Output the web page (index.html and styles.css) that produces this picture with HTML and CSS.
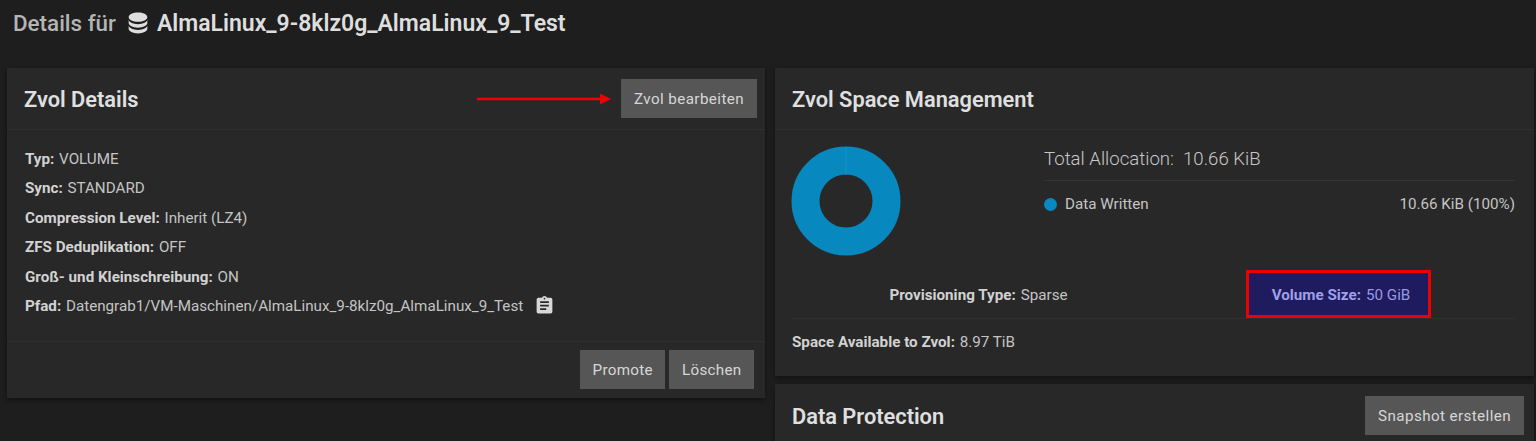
FILE: index.html
```html
<!DOCTYPE html>
<html lang="en">
<head>
    <meta charset="UTF-8">
    <title>Details für AlmaLinux_9-8klz0g_AlmaLinux_9_Test</title>
    <link rel="stylesheet" href="styles.css">
</head>
<body>
    <h1 class="page-title">
        <span class="page-title-label">Details für</span>
        <svg class="page-title-icon" viewBox="0 0 24 24"><path d="M12,3C7.58,3 4,4.79 4,7C4,9.21 7.58,11 12,11C16.42,11 20,9.21 20,7C20,4.79 16.42,3 12,3M4,9V12C4,14.21 7.58,16 12,16C16.42,16 20,14.21 20,12V9C20,11.21 16.42,13 12,13C7.58,13 4,11.21 4,9M4,14V17C4,19.21 7.58,21 12,21C16.42,21 20,19.21 20,17V14C20,16.21 16.42,18 12,18C7.58,18 4,16.21 4,14Z"/></svg>
        <span class="page-title-name">AlmaLinux_9-8klz0g_AlmaLinux_9_Test</span>
    </h1>

    <div class="columns">
        <section class="card">
            <header class="card-header">
                <h2>Zvol Details</h2>
                <svg class="arrow" viewBox="0 0 134 12"><path d="M0 6H124" stroke="#f00000" stroke-width="2.5"/><path d="M123 0.5L134 6L123 11.5Z" fill="#f00000"/></svg>
                <button class="btn">Zvol bearbeiten</button>
            </header>
            <div class="details">
                <p><b>Typ:</b> VOLUME</p>
                <p><b>Sync:</b> STANDARD</p>
                <p><b>Compression Level:</b> Inherit (LZ4)</p>
                <p><b>ZFS Deduplikation:</b> OFF</p>
                <p><b>Groß- und Kleinschreibung:</b> ON</p>
                <p><b>Pfad:</b> Datengrab1/VM-Maschinen/AlmaLinux_9-8klz0g_AlmaLinux_9_Test
                    <svg class="copy-icon" viewBox="0 0 24 24"><path d="M17,9H7V7H17M17,13H7V11H17M14,17H7V15H14M12,3A1,1 0 0,1 13,4A1,1 0 0,1 12,5A1,1 0 0,1 11,4A1,1 0 0,1 12,3M19,3H14.82C14.4,1.84 13.3,1 12,1C10.7,1 9.6,1.84 9.18,3H5A2,2 0 0,0 3,5V19A2,2 0 0,0 5,21H19A2,2 0 0,0 21,19V5A2,2 0 0,0 19,3Z"/></svg>
                </p>
            </div>
            <footer class="card-footer">
                <button class="btn">Promote</button>
                <button class="btn">Löschen</button>
            </footer>
        </section>

        <div class="stack">
            <section class="card">
                <header class="card-header">
                    <h2>Zvol Space Management</h2>
                </header>
                <div class="space">
                    <div class="space-top">
                        <svg class="donut" viewBox="0 0 110 110"><circle cx="55" cy="55" r="40.5" fill="none" stroke="#0788bf" stroke-width="28"/><path d="M55 1V29" stroke="#1a94c8" stroke-width="1"/></svg>
                        <div class="alloc">
                            <div class="alloc-total">Total Allocation:&nbsp; 10.66 KiB</div>
                            <div class="alloc-row">
                                <span class="dot"></span>
                                <span>Data Written</span>
                                <span class="alloc-value">10.66 KiB (100%)</span>
                            </div>
                        </div>
                    </div>
                    <div class="space-pair">
                        <div class="pair-item"><b>Provisioning Type:</b> Sparse</div>
                        <div class="pair-item pair-highlight"><b>Volume Size:</b> 50 GiB</div>
                    </div>
                    <p class="space-free"><b>Space Available to Zvol:</b> 8.97 TiB</p>
                </div>
            </section>

            <section class="card">
                <header class="card-header card-header-short">
                    <h2>Data Protection</h2>
                    <button class="btn btn-right">Snapshot erstellen</button>
                </header>
            </section>
        </div>
    </div>
</body>
</html>
```

FILE: styles.css
```css
html, body {
    height: 441px;
    overflow: hidden;
}
body {
    margin: 0;
    background: #1e1e1e;
    color: #c4c4c4;
    font-family: Roboto, "Liberation Sans", sans-serif;
    font-size: 15.2px;
}
.page-title {
    display: flex;
    align-items: center;
    height: 46px;
    margin: 0 0 22px;
    padding-left: 13px;
    font-size: 22.4px;
    font-weight: 500;
    color: #dedede;
}
.page-title-label {
    color: #b5b5b5;
}
.page-title-name {
    font-size: 23px;
    font-weight: 600;
}
.page-title-icon {
    width: 28px;
    height: 28px;
    margin: 0 5px 0 8px;
    fill: #dedede;
}
.columns {
    display: grid;
    grid-template-columns: 758px 759px;
    column-gap: 10px;
    align-items: start;
    padding-left: 7px;
}
.stack {
    display: flex;
    flex-direction: column;
    gap: 8px;
}
.card {
    background: #282828;
    box-shadow: 0 2px 5px rgba(0,0,0,0.45);
}
.card-header {
    display: flex;
    align-items: center;
    height: 61px;
    padding: 0 8px 0 17px;
    border-bottom: 1px solid #2f2f2f;
}
.card-header-short {
    height: 59px;
    padding-top: 2px;
    border: none;
}
.card-header h2 {
    margin: 0;
    padding-top: 1px;
    font-size: 21.8px;
    font-weight: 600;
    color: #e0e0e0;
}
.arrow {
    width: 134px;
    height: 12px;
    margin-left: auto;
    margin-right: 10px;
}
.btn {
    height: 39px;
    padding: 0 13px;
    border: none;
    border-radius: 0;
    background: #565656;
    color: #d6d6d6;
    font-family: inherit;
    font-size: 15.2px;
    font-weight: 400;
    letter-spacing: 0.4px;
    cursor: pointer;
}
.btn-right {
    margin-left: auto;
    margin-right: 2px;
}
.details {
    padding: 15px 17px 20px 18px;
    border-bottom: 1px solid #2f2f2f;
}
.details p {
    display: block;
    height: 29.4px;
    margin: 0;
    line-height: 29.4px;
}
b {
    font-weight: 700;
    color: #d2d2d2;
    margin-right: 1px;
}
.copy-icon {
    width: 21px;
    height: 21px;
    margin-left: 7px;
    vertical-align: -5px;
    fill: #d8d8d8;
}
.card-footer {
    display: flex;
    justify-content: flex-end;
    gap: 4px;
    padding: 8px 11px 9px 0;
}
.card-footer .btn {
    padding: 0 12.5px;
    letter-spacing: 0.3px;
}
.space {
    padding: 16px 19px 25px 17px;
}
.space-top {
    display: flex;
    height: 124px;
}
.donut {
    width: 110px;
    height: 110px;
    margin-left: -1px;
}
.alloc {
    flex: 1;
    margin-left: 143px;
}
.alloc-total {
    height: 34px;
    border-bottom: 1px solid #343434;
    font-size: 18.6px;
    font-weight: 300;
    line-height: 26px;
    color: #c8c8c8;
}
.alloc-row {
    display: flex;
    align-items: center;
    margin-top: 14px;
    line-height: 18px;
}
.dot {
    width: 13px;
    height: 13px;
    margin-right: 8px;
    border-radius: 50%;
    background: #0788bf;
}
.alloc-value {
    margin-left: auto;
}
.space-pair {
    display: grid;
    grid-template-columns: 351px 351px;
    column-gap: 9px;
    height: 48px;
    padding-left: 11px;
    border-bottom: 1px solid #303030;
}
.pair-item {
    display: flex;
    align-items: center;
    justify-content: center;
    gap: 4px;
    padding-top: 2px;
}
.pair-highlight {
    justify-self: center;
    height: 48px;
    padding: 2px 18px 0 23px;
    box-sizing: border-box;
    border: 3px solid #ee0000;
    background: #1e1b5e;
    color: #9a9ae0;
}
.pair-highlight b {
    color: #a0a0e8;
}
.space-free {
    margin: 14px 0 0;
    line-height: 18px;
}
```
